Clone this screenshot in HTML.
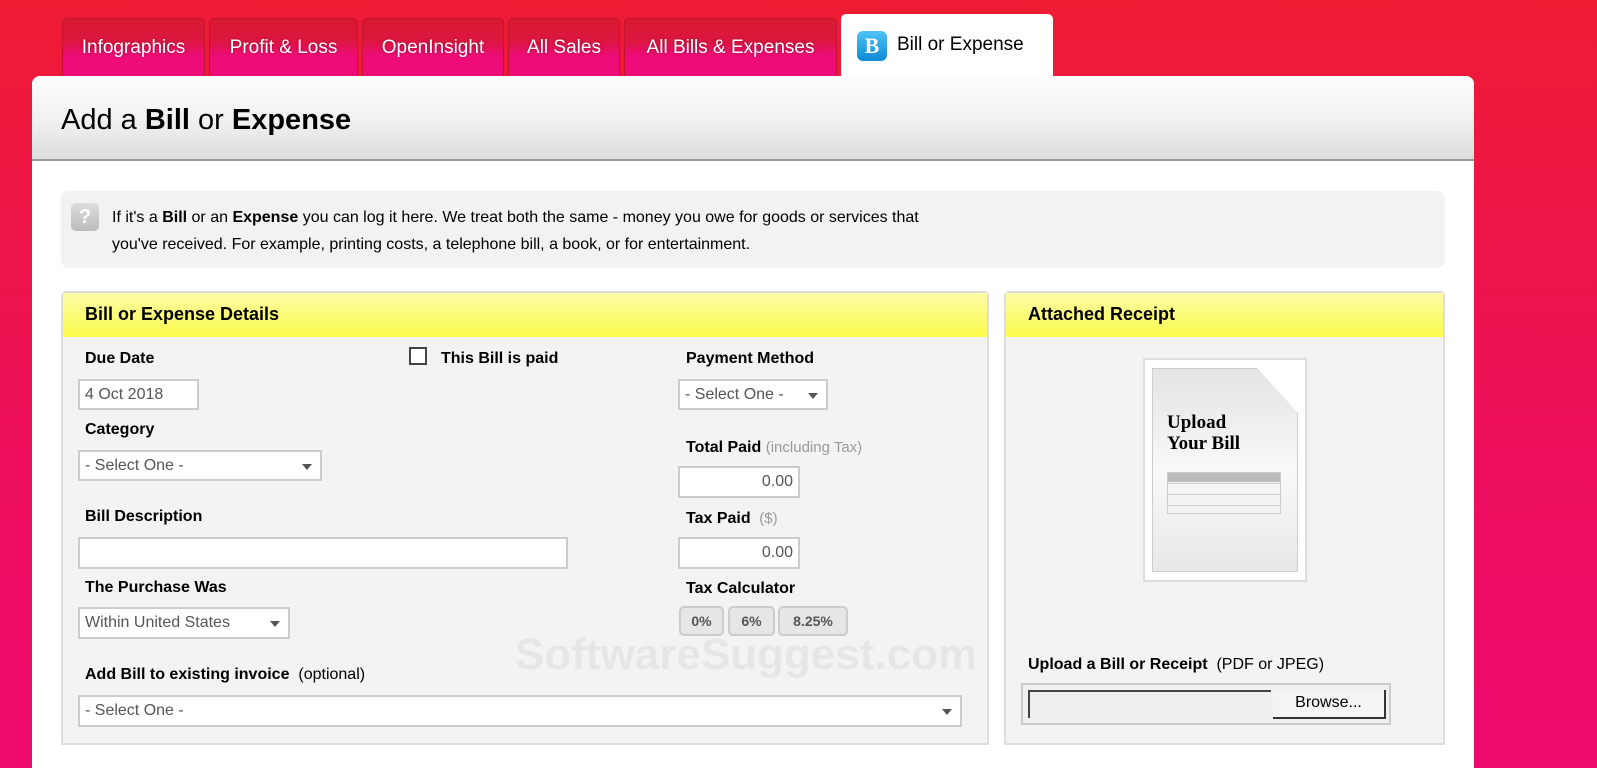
<!DOCTYPE html>
<html><head><style>
*{box-sizing:border-box;margin:0;padding:0}
html,body{width:1597px;height:768px;overflow:hidden}
body{background:linear-gradient(#ed1c33,#ec0e5c 60%,#ec0a6e);font-family:"Liberation Sans",sans-serif;position:relative;color:#000}
.tab{position:absolute;top:18px;height:58px;background:linear-gradient(#d81a30,#dc1640 40%,#ee0c78 65%,#ee0c78);border:1px solid #c4122a;border-bottom:none;border-radius:5px 5px 0 0;color:#fff;font-size:19px;padding-top:18px;text-align:center;text-shadow:0 0 3px rgba(0,0,0,.3)}
.act{position:absolute;top:14px;left:841px;width:212px;height:62px;background:#fff;border-radius:5px 5px 0 0;font-size:19px}
.panel{position:absolute;left:32px;top:76px;width:1442px;height:692px;background:#fff;border-radius:8px 8px 0 0;overflow:hidden}
.hdr{height:85px;background:linear-gradient(#fdfdfd,#f2f2f2 50%,#dcdddd);border-bottom:2px solid #999;font-size:29px;padding:28px 0 0 29px}
.info{position:absolute;left:29px;top:115px;width:1384px;height:77px;background:#f2f2f2;border-radius:8px;font-size:16px;line-height:27px;padding:13px 0 0 51px}
.q{position:absolute;left:10px;top:12px;width:28px;height:28px;border-radius:5px;background:linear-gradient(#ddd,#bbb);color:#fff;font-weight:bold;text-align:center;font-size:20px;line-height:28px}
.box{position:absolute;top:291px;height:454px;background:#f3f3f3;border:2px solid #ddd;border-radius:5px 5px 0 0}
.bh{height:44px;background:linear-gradient(#fcfca8,#fbfb4a);font-weight:bold;font-size:18px;padding:11px 0 0 22px}
.l{position:absolute;font-weight:bold;font-size:16px}
.in{position:absolute;background:#fff;border:2px solid #ccc;font-size:16px;color:#555;padding:5px 5px}
.sel::after{content:"";position:absolute;right:8px;top:12px;border:5px solid transparent;border-top:6px solid #555}
.btn{position:absolute;top:606px;height:30px;border:2px solid #ccc;border-radius:5px;background:#e6e6e6;font-weight:bold;color:#555;font-size:14px;text-align:center;line-height:26px}
</style></head><body>
<div class="tab" style="left:62px;width:143px">Infographics</div>
<div class="tab" style="left:209px;width:149px">Profit &amp; Loss</div>
<div class="tab" style="left:362px;width:142px">OpenInsight</div>
<div class="tab" style="left:508px;width:112px">All Sales</div>
<div class="tab" style="left:624px;width:213px">All Bills &amp; Expenses</div>
<div class="act"><div style="position:absolute;left:16px;top:17px;width:30px;height:30px;border-radius:6px;background:linear-gradient(#4fc3f7,#0a8ad6);color:#fff;font-family:'Liberation Serif',serif;font-weight:bold;font-size:22px;text-align:center;line-height:30px">B</div><span style="position:absolute;left:56px;top:20px">Bill or Expense</span></div>
<div class="panel">
<div class="hdr">Add a <b>Bill</b> or <b>Expense</b></div>
<div class="info"><div class="q">?</div>If it's a <b>Bill</b> or an <b>Expense</b> you can log it here. We treat both the same - money you owe for goods or services that<br>you've received. For example, printing costs, a telephone bill, a book, or for entertainment.</div>
</div>
<div class="box" style="left:61px;width:928px"><div class="bh">Bill or Expense Details</div></div>
<div class="box" style="left:1004px;width:441px"><div class="bh">Attached Receipt</div></div>
<div class="l" style="left:85px;top:350px">Due Date</div>
<div style="position:absolute;left:409px;top:347px;width:18px;height:18px;border:2px solid #444;background:#fff"></div>
<div class="l" style="left:441px;top:350px">This Bill is paid</div>
<div class="l" style="left:686px;top:350px">Payment Method</div>
<div class="in" style="left:78px;top:379px;width:121px;height:31px">4 Oct 2018</div>
<div class="in sel" style="left:678px;top:379px;width:150px;height:31px">- Select One -</div>
<div class="l" style="left:85px;top:421px">Category</div>
<div class="in sel" style="left:78px;top:450px;width:244px;height:31px">- Select One -</div>
<div class="l" style="left:686px;top:439px">Total Paid <span style="font-weight:normal;color:#999;font-size:15px">(including Tax)</span></div>
<div class="in" style="left:678px;top:466px;width:122px;height:32px;text-align:right">0.00</div>
<div class="l" style="left:85px;top:508px">Bill Description</div>
<div class="l" style="left:686px;top:510px">Tax Paid <span style="font-weight:normal;color:#999;font-size:15px">&nbsp;($)</span></div>
<div class="in" style="left:78px;top:537px;width:490px;height:32px"></div>
<div class="in" style="left:678px;top:537px;width:122px;height:32px;text-align:right">0.00</div>
<div class="l" style="left:85px;top:579px">The Purchase Was</div>
<div class="l" style="left:686px;top:580px">Tax Calculator</div>
<div class="in sel" style="left:78px;top:607px;width:212px;height:32px">Within United States</div>
<div class="btn" style="left:679px;width:45px">0%</div>
<div class="btn" style="left:728px;width:47px">6%</div>
<div class="btn" style="left:778px;width:70px">8.25%</div>
<div style="position:absolute;left:515px;top:630px;font-size:44px;font-weight:bold;color:rgba(0,0,0,.05)">SoftwareSuggest.com</div>
<div class="l" style="left:85px;top:666px">Add Bill to existing invoice <span style="font-weight:normal">&nbsp;(optional)</span></div>
<div class="in sel" style="left:78px;top:695px;width:884px;height:32px">- Select One -</div>
<div style="position:absolute;left:1143px;top:358px;width:164px;height:224px;background:#fff;border:2px solid #ddd">
<div style="position:absolute;left:7px;top:8px;width:146px;height:204px;background:linear-gradient(#e4e4e4,#f8f8f8 50%,#e8e8e8);border:1px solid #ccc;clip-path:polygon(0 0,72% 0 ,100% 22%,100% 100%,0 100%)"></div>
<div style="position:absolute;left:22px;top:52px;font-family:'Liberation Serif',serif;font-weight:bold;font-size:19px;line-height:21px">Upload<br>Your Bill</div>
<div style="position:absolute;left:22px;top:112px;width:114px;height:42px;border:1px solid #ccc;background:linear-gradient(#bbb 0 9px,transparent 9px),repeating-linear-gradient(transparent 0 10px,#ccc 10px 11px)"></div>
</div>
<div class="l" style="left:1028px;top:656px">Upload a Bill or Receipt <span style="font-weight:normal">&nbsp;(PDF or JPEG)</span></div>
<div style="position:absolute;left:1021px;top:683px;width:370px;height:42px;background:#f0f0f0;border:2px solid #ccc">
<div style="position:absolute;left:5px;top:5px;width:243px;height:28px;border-top:2px solid #444;border-left:2px solid #444;background:#eee"></div>
<div style="position:absolute;left:250px;top:5px;width:113px;height:29px;border-right:2px solid #333;border-bottom:2px solid #333;background:#f4f4f4;text-align:center;font-size:16px;line-height:26px">Browse...</div>
</div>
</body></html>
